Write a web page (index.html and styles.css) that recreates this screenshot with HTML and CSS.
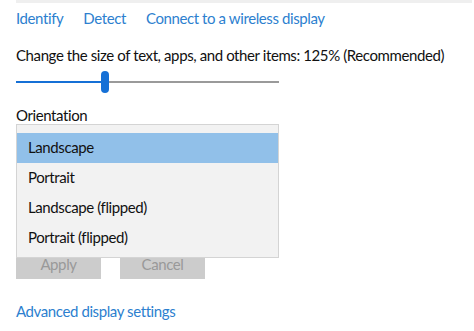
FILE: index.html
```html
<!DOCTYPE html>
<html>

<head>
    <meta charset="utf-8">
    <meta name="viewport" content="width=device-width">
    <link rel="stylesheet" href="styles.css">
</head>

<body>
    <div class="top-edge"></div>
    <div class="container">
        <div class="links">
            <a href="#">Identify</a>
            <a href="#">Detect</a>
            <a href="#">Connect to a wireless display</a>
        </div>
        <div class="scale-label">
            Change the size of text, apps, and other items: 125% (Recommended)
        </div>
        <div class="slider">
            <div class="fill"></div>
            <div class="thumb"></div>
        </div>
        <div class="field-label">
            Orientation
        </div>
        <ul class="dropdown">
            <li class="selected">Landscape</li>
            <li>Portrait</li>
            <li>Landscape (flipped)</li>
            <li>Portrait (flipped)</li>
        </ul>
        <div class="buttons">
            <button>Apply</button>
            <button>Cancel</button>
        </div>
        <a class="advanced" href="#">Advanced display settings</a>
    </div>
</body>

</html>
```

FILE: styles.css
```css
body {
    margin: 0;
    font-family: Lato, "Noto Sans", sans-serif;
    font-size: 15px;
    letter-spacing: -0.4px;
    line-height: 20px;
    color: #111;
    background: #fff;
}

a {
    color: #2d7fcf;
    text-decoration: none;
}

.top-edge {
    margin-left: 16px;
    width: 456px;
    height: 3px;
    background: #efefef;
}

.container {
    padding-left: 16px;
}

.links {
    display: flex;
    gap: 20px;
    margin-top: 5px;
}

.scale-label {
    margin-top: 17px;
    white-space: nowrap;
}

.slider {
    position: relative;
    width: 263px;
    height: 2px;
    margin-top: 16px;
    background: #9a9a9a;
}

.fill {
    width: 88px;
    height: 2px;
    background: #1570d6;
}

.thumb {
    position: absolute;
    left: 85px;
    top: -10px;
    width: 8px;
    height: 22px;
    border-radius: 4px;
    background: #1570d6;
}

.field-label {
    margin-top: 22px;
}

.dropdown {
    list-style: none;
    margin: -1px 0 0;
    padding: 8px 0 4px;
    width: 261px;
    background: #f2f2f2;
    border: 1px solid #d4d4d4;
}

.dropdown li {
    height: 30px;
    line-height: 29px;
    padding-left: 11px;
}

.dropdown li.selected {
    background: #91c0e9;
}

.buttons {
    display: flex;
    gap: 19px;
}

.buttons button {
    width: 85px;
    height: 21px;
    border: none;
    padding: 0;
    background: #cccccc;
    color: #999;
    font-family: inherit;
    font-size: 15px;
    letter-spacing: inherit;
    line-height: 12px;
    display: flex;
    justify-content: center;
    align-items: flex-start;
}

.advanced {
    display: block;
    margin-top: 22px;
}
```
